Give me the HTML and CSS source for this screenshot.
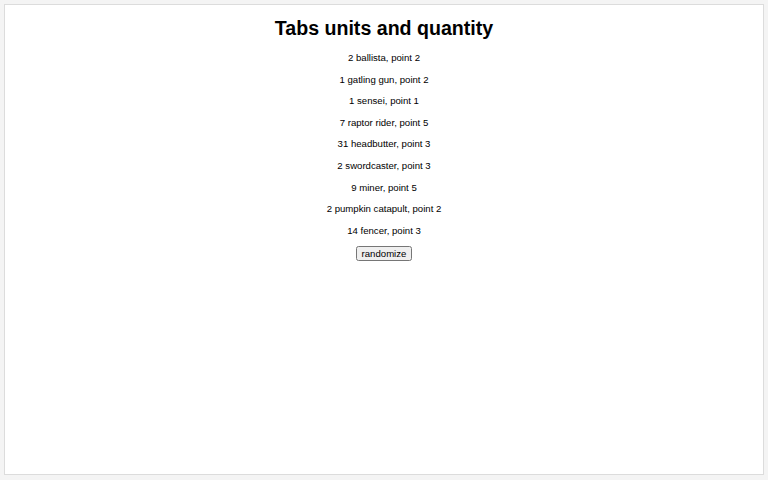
FILE: index.html
```html
<!DOCTYPE html>
<html>
<head>
<meta charset="utf-8">
<link rel="stylesheet" href="styles.css">
</head>
<body>
<div class="app">
  <h1 class="title">Tabs units and quantity</h1>
  <p class="unit">2 ballista, point 2</p>
  <p class="unit">1 gatling gun, point 2</p>
  <p class="unit">1 sensei, point 1</p>
  <p class="unit">7 raptor rider, point 5</p>
  <p class="unit">31 headbutter, point 3</p>
  <p class="unit">2 swordcaster, point 3</p>
  <p class="unit">9 miner, point 5</p>
  <p class="unit">2 pumpkin catapult, point 2</p>
  <p class="unit">14 fencer, point 3</p>
  <button class="btn">randomize</button>
</div>
</body>
</html>
```
FILE: styles.css
```css
html, body {
  margin: 0;
  padding: 0;
}
body {
  background: #f4f4f4;
  padding: 4px;
  font-family: "Liberation Sans", Arial, sans-serif;
  font-size: 9.6px;
  color: #000;
}
.app {
  background: #fff;
  border: 1px solid #dcdcdc;
  height: 471px;
  box-sizing: border-box;
  text-align: center;
  padding-top: 1px;
}
.title {
  font-size: 19.6px;
  line-height: 23px;
  font-weight: bold;
  margin: 11px 0 12px;
}
.unit {
  margin: 10px 0;
  line-height: 11.6px;
}
.btn {
  display: block;
  margin: 0 auto;
  height: 15px;
  font-family: "Liberation Sans", Arial, sans-serif;
  font-size: 9.6px;
  line-height: 11px;
  padding: 0 4px;
}
```
